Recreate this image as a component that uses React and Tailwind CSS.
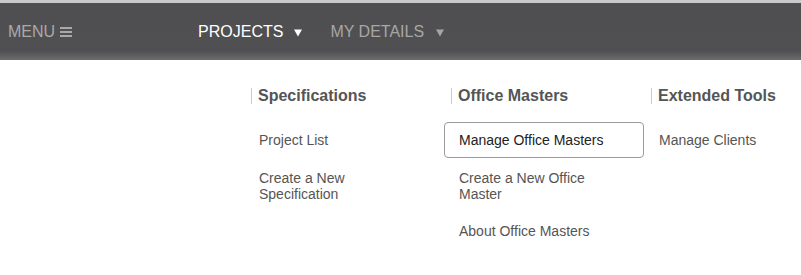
import React from "react";

const Tri = ({ color }) => (
  <svg width="10" height="8" viewBox="0 0 10 8" className="inline-block">
    <path d="M1 0.5 L9 0.5 L5 7.5 Z" fill={color} />
  </svg>
);

const columns = [
  { title: "Specifications", items: ["Project List", "Create a New Specification"] },
  {
    title: "Office Masters",
    items: ["Manage Office Masters", "Create a New Office Master", "About Office Masters"],
    active: 0,
  },
  { title: "Extended Tools", items: ["Manage Clients"] },
];

export default function App() {
  return (
    <div
      className="w-[801px] h-[275px] bg-white overflow-hidden"
      style={{ fontFamily: '"Liberation Sans", Arial, sans-serif' }}
    >
      <div className="h-[60px] border-t-[3px] border-[#c9c9cb] bg-[linear-gradient(to_bottom,#4f4f51_0px,#505052_48px,#6c6c6c_57px)] flex items-center text-[16px] leading-[18px]">
        <div className="ml-[8px] flex items-center text-[#a9a9a9]">
          <span>MENU</span>
          <svg width="12" height="10" viewBox="0 0 12 10" className="ml-[5px]">
            <rect x="0" y="0" width="12" height="2" fill="#a9a9a9" />
            <rect x="0" y="4" width="12" height="2" fill="#a9a9a9" />
            <rect x="0" y="8" width="12" height="2" fill="#a9a9a9" />
          </svg>
        </div>
        <div className="ml-[126px] flex items-center text-white">
          <span>PROJECTS</span>
          <span className="ml-[10px] mt-[3px] flex">
            <Tri color="#ffffff" />
          </span>
        </div>
        <div className="ml-[27px] flex items-center text-[#a6a6a6]">
          <span>MY DETAILS</span>
          <span className="ml-[11px] mt-[3px] flex">
            <Tri color="#a6a6a6" />
          </span>
        </div>
      </div>
      <div className="flex pl-[244px] pt-[28px]">
        {columns.map((col) => (
          <div key={col.title} className="w-[200px] shrink-0 flex flex-col">
            <div className="ml-[7px] border-l border-[#cccccc] pl-[6px] text-[16px] leading-[16px] font-bold text-[#555555]">
              {col.title}
            </div>
            <div className="mt-[18px] flex flex-col gap-[1.5px]">
              {col.items.map((it, i) => (
                <div
                  key={it}
                  className={
                    col.active === i
                      ? "border border-[#9a9a9a] rounded-[4px] pl-[14px] pr-[30px] py-[9px] text-[14px] leading-[16px] text-[#222222]"
                      : "border border-transparent pl-[14px] pr-[30px] py-[9px] text-[14px] leading-[16px] text-[#555555]"
                  }
                >
                  {it}
                </div>
              ))}
            </div>
          </div>
        ))}
      </div>
    </div>
  );
}
